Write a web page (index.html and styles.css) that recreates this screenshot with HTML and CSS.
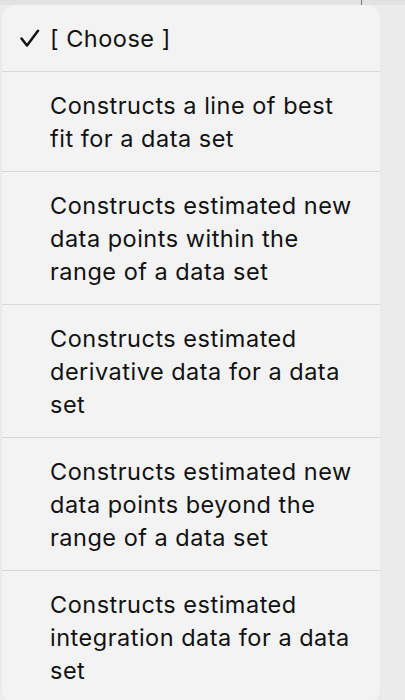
FILE: index.html
```html
<!DOCTYPE html>
<html>
<head>
<meta charset="utf-8">
<link rel="stylesheet" href="styles.css">
</head>
<body>
<div class="page">
  <div class="topbar"><span class="tick"></span></div>
  <div class="menu">
    <div class="item selected">
      <svg class="check" width="20" height="19" viewBox="0 0 20 19"><path d="M1.5 9.5 L7 16.5 L18 1.8" fill="none" stroke="#111" stroke-width="2.5" stroke-linecap="round" stroke-linejoin="round"/></svg>
      <span class="label">[ Choose ]</span>
    </div>
    <div class="item"><span class="label">Constructs a line of best fit for a data set</span></div>
    <div class="item"><span class="label">Constructs estimated new data points within the range of a data set</span></div>
    <div class="item"><span class="label">Constructs estimated derivative data for a data set</span></div>
    <div class="item"><span class="label">Constructs estimated new data points beyond the range of a data set</span></div>
    <div class="item"><span class="label">Constructs estimated integration data for a data set</span></div>
  </div>
</div>
</body>
</html>
```
FILE: styles.css
```css
html, body {
  margin: 0;
  padding: 0;
  background: #ebebeb;
  height: 700px;
  overflow: hidden;
}
.page {
  width: 405px;
  height: 700px;
  position: relative;
  font-family: Inter, "Noto Sans", sans-serif;
  color: #111;
}
.topbar {
  height: 5px;
  background: #e2e2e2;
  position: relative;
}
.tick {
  position: absolute;
  left: 361px;
  top: 0;
  width: 1px;
  height: 5px;
  background: #777;
}
.menu {
  margin-left: 2px;
  width: 378px;
  background: #f3f3f3;
  border-radius: 13px;
  overflow: hidden;
}
.item {
  display: flex;
  align-items: flex-start;
  padding: 17px 16px 16px 48px;
  border-top: 1px solid #d9d9d9;
  font-size: 23.5px;
  line-height: 33px;
  letter-spacing: 0.5px;
  position: relative;
}
.item.selected {
  border-top: none;
  padding-top: 17px;
  padding-bottom: 16px;
}
.check {
  position: absolute;
  left: 18px;
  top: 24px;
}
.label {
  display: block;
  max-width: 310px;
}
```
